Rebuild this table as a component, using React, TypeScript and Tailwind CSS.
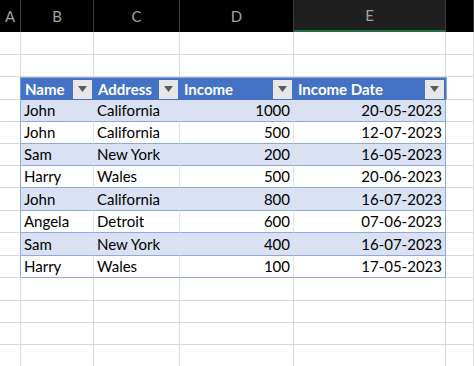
const cols = [21, 73, 86, 114, 152, 28];
const letters = ["A", "B", "C", "D", "E", ""];

const data: [string, string, string, string][] = [
  ["John", "California", "1000", "20-05-2023"],
  ["John", "California", "500", "12-07-2023"],
  ["Sam", "New York", "200", "16-05-2023"],
  ["Harry", "Wales", "500", "20-06-2023"],
  ["John", "California", "800", "16-07-2023"],
  ["Angela", "Detroit", "600", "07-06-2023"],
  ["Sam", "New York", "400", "16-07-2023"],
  ["Harry", "Wales", "100", "17-05-2023"],
];

const dataHeights = [22, 22, 22, 22, 23, 22, 23, 22];
const emptyAfter = [23, 22, 22, 23];

function FilterButton() {
  return (
    <div className="ml-auto mr-[2px] flex h-[19px] w-[19px] shrink-0 items-center justify-center bg-[#e7e7e7]">
      <svg width="9" height="6" viewBox="0 0 9 6">
        <path d="M0 0 H9 L4.5 6 Z" fill="#5b5b5b" />
      </svg>
    </div>
  );
}

function EmptyRow({ h }: { h: number }) {
  return (
    <div className="flex" style={{ height: h }}>
      {cols.map((w, i) => (
        <div
          key={i}
          className="shrink-0 border-b border-r border-[#d9d9d9] bg-white"
          style={{ width: w }}
        />
      ))}
    </div>
  );
}

export default function App() {
  return (
    <div
      className="h-[366px] w-[474px] overflow-hidden bg-white text-[15px] text-black"
      style={{ fontFamily: "Lato, 'Open Sans', sans-serif" }}
    >
      {/* column letters */}
      <div className="flex h-[32px] bg-black">
        {cols.map((w, i) => (
          <div
            key={i}
            className={
              "flex shrink-0 items-center justify-center border-r border-[#3a3a3a] text-[#a3a3a3] " +
              (i === 4 ? "border-b-2 border-b-[#1e7145] bg-[#1f1f1f]" : "")
            }
            style={{ width: w }}
          >
            {letters[i]}
          </div>
        ))}
      </div>

      <EmptyRow h={23} />
      <EmptyRow h={22} />

      {/* table header */}
      <div className="flex h-[23px]">
        <div className="w-[21px] shrink-0 border-b border-r border-b-[#d9d9d9] border-r-[#6f95d6] bg-white" />
        {["Name", "Address", "Income", "Income Date"].map((t, i) => (
          <div
            key={t}
            className="flex shrink-0 items-center border-t border-t-[#8eaadb] bg-[#4472c4] pl-[4px] font-bold text-white"
            style={{ width: cols[i + 1] }}
          >
            <span>{t}</span>
            <FilterButton />
          </div>
        ))}
        <div className="w-[28px] shrink-0 border-b border-r border-[#d9d9d9] border-l border-l-[#8eaadb] bg-white" />
      </div>

      {data.map((r, ri) => {
        const band = ri % 2 === 0;
        const bg = band ? "bg-[#d9e1f2]" : "bg-white";
        const inner = band ? "border-r-[#d9e1f2]" : "border-r-[#e3e3e3]";
        return (
          <div key={ri} className="flex" style={{ height: dataHeights[ri] }}>
            <div className="w-[21px] shrink-0 border-b border-r border-b-[#d9d9d9] border-r-[#8eaadb] bg-white" />
            {r.map((v, ci) => (
              <div
                key={ci}
                className={
                  "flex shrink-0 items-center border-b border-b-[#8eaadb] " +
                  bg +
                  " " +
                  (ci === 3 ? "border-r border-r-[#8eaadb]" : "border-r " + inner) +
                  (ci >= 2 ? " justify-end pr-[3px]" : " pl-[3px]")
                }
                style={{ width: cols[ci + 1] }}
              >
                {v}
              </div>
            ))}
            <div className="w-[28px] shrink-0 border-b border-r border-[#d9d9d9] bg-white" />
          </div>
        );
      })}

      {emptyAfter.map((h, i) => (
        <EmptyRow key={i} h={h} />
      ))}
    </div>
  );
}
